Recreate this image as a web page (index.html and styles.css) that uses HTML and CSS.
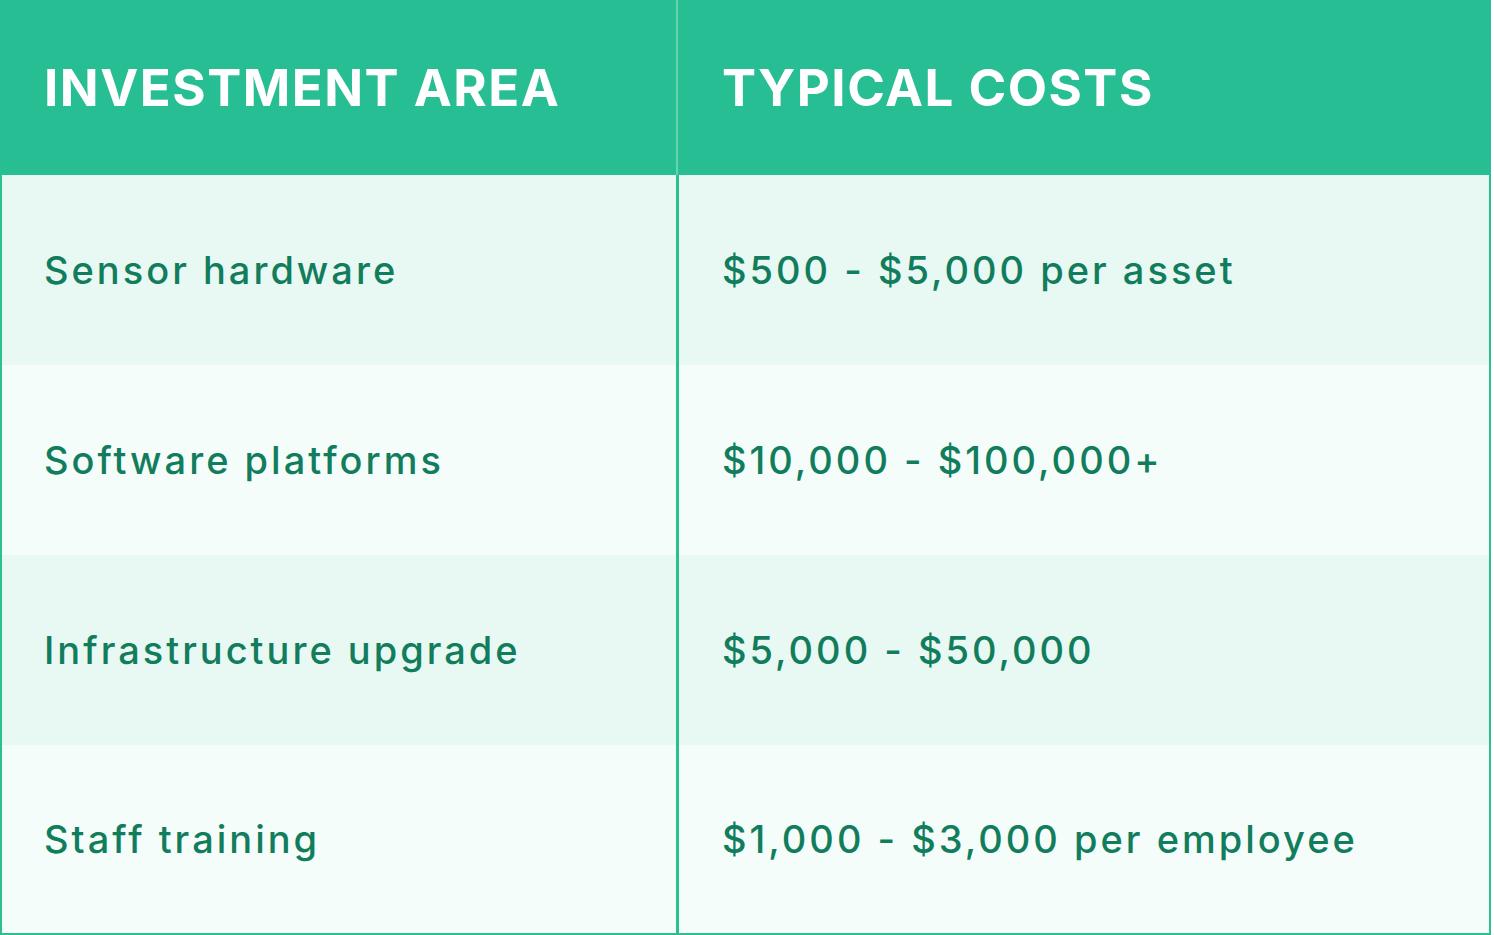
FILE: index.html
```html
<!DOCTYPE html>
<html lang="en">
<head>
<meta charset="utf-8">
<title>Investment costs</title>
<link rel="stylesheet" href="styles.css">
</head>
<body>
<div class="table" role="table">
  <div class="cell head first" role="columnheader">INVESTMENT AREA</div>
  <div class="cell head second" role="columnheader">TYPICAL COSTS</div>

  <div class="cell body first odd" role="cell">Sensor hardware</div>
  <div class="cell body second odd" role="cell">$500 - $5,000 per asset</div>

  <div class="cell body first even" role="cell">Software platforms</div>
  <div class="cell body second even" role="cell">$10,000 - $100,000+</div>

  <div class="cell body first odd" role="cell">Infrastructure upgrade</div>
  <div class="cell body second odd" role="cell">$5,000 - $50,000</div>

  <div class="cell body first even last" role="cell">Staff training</div>
  <div class="cell body second even last" role="cell">$1,000 - $3,000 per employee</div>
</div>
</body>
</html>
```
FILE: styles.css
```css
html, body {
  margin: 0;
  padding: 0;
  background: #ffffff;
}

.table {
  display: grid;
  grid-template-columns: 678px 813px;
  width: 1491px;
  font-family: Inter, "Liberation Sans", sans-serif;
}

.cell {
  box-sizing: border-box;
  display: flex;
  align-items: center;
  padding-left: 44px;
}

.head {
  height: 175px;
  background: #27be93;
  color: #ffffff;
  font-size: 51px;
  font-weight: 700;
  letter-spacing: 1.5px;
}

.head.first {
  border-right: 2px solid rgba(255, 255, 255, 0.3);
}

.body {
  height: 190px;
  color: #127d5d;
  font-size: 38px;
  font-weight: 500;
  letter-spacing: 3px;
}

.body.first {
  border-left: 2px solid #2bbf92;
  border-right: 2px solid #2bbf92;
  padding-left: 42px;
}

.body.second {
  border-left: 1px solid #2bbf92;
  border-right: 2px solid #2bbf92;
  padding-left: 43px;
}

.odd {
  background: #e8f8f2;
}

.even {
  background: #f5fdfa;
}

.last {
  border-bottom: 2px solid #2bbf92;
}
```
